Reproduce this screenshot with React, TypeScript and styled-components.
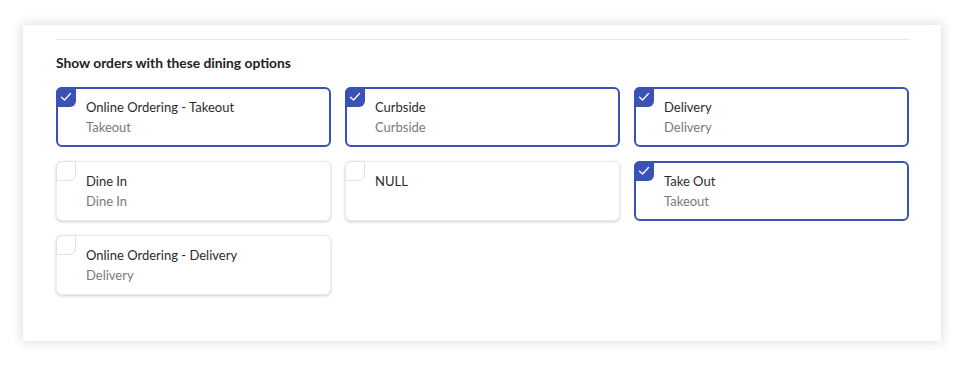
import React from "react";
import styled, { createGlobalStyle } from "styled-components";

const Global = createGlobalStyle`
  html, body { margin: 0; padding: 0; background: #ffffff; }
  body { font-family: Lato, "Noto Sans", sans-serif; }
`;

const Page = styled.div`
  width: 974px;
  height: 374px;
  padding: 25px 33px 0 23px;
  box-sizing: border-box;
  background: #ffffff;
`;

const Panel = styled.section`
  width: 918px;
  height: 316px;
  box-sizing: border-box;
  background: #ffffff;
  box-shadow: 0 0 10px 2px rgba(0, 0, 0, 0.12);
  padding: 14px 31px 0 33px;
`;

const Divider = styled.hr`
  margin: 0;
  border: none;
  border-top: 1px solid #e6e6e6;
`;

const Title = styled.h3`
  margin: 14px 0 0 0;
  font-size: 13.8px;
  line-height: 18px;
  font-weight: 700;
  color: #222;
`;

const Grid = styled.div`
  margin-top: 15px;
  display: grid;
  grid-template-columns: repeat(3, 275px);
  column-gap: 14px;
  row-gap: 14px;
`;

const Card = styled.div<{ $checked: boolean }>`
  position: relative;
  height: 60px;
  box-sizing: border-box;
  border-radius: 6px;
  background: #fff;
  border: ${(p) => (p.$checked ? "2px solid #3a52b6" : "1px solid #ececec")};
  box-shadow: ${(p) => (p.$checked ? "none" : "0 1px 3px rgba(0,0,0,0.2)")};
  padding: ${(p) => (p.$checked ? "9px 12px 0 28px" : "10px 13px 0 29px")};
`;

const Check = styled.span<{ $checked: boolean }>`
  position: absolute;
  top: ${(p) => (p.$checked ? "-2px" : "-1px")};
  left: ${(p) => (p.$checked ? "-2px" : "-1px")};
  width: 20px;
  height: 20px;
  box-sizing: border-box;
  border-radius: 6px 0 6px 0;
  background: ${(p) => (p.$checked ? "#3a52b6" : "#fff")};
  border: ${(p) => (p.$checked ? "none" : "1px solid #e2e2e2")};
  display: flex;
  align-items: center;
  justify-content: center;
`;

const Name = styled.div`
  font-size: 13px;
  line-height: 18px;
  color: #2b2b2b;
`;

const Sub = styled.div`
  margin-top: 2px;
  font-size: 13px;
  line-height: 18px;
  color: #7a7a7a;
`;

const options = [
  { name: "Online Ordering - Takeout", sub: "Takeout", checked: true },
  { name: "Curbside", sub: "Curbside", checked: true },
  { name: "Delivery", sub: "Delivery", checked: true },
  { name: "Dine In", sub: "Dine In", checked: false },
  { name: "NULL", sub: "", checked: false },
  { name: "Take Out", sub: "Takeout", checked: true },
  { name: "Online Ordering - Delivery", sub: "Delivery", checked: false },
];

export default function App() {
  return (
    <Page>
      <Global />
      <Panel>
        <Divider />
        <Title>Show orders with these dining options</Title>
        <Grid>
          {options.map((o) => (
            <Card key={o.name} $checked={o.checked}>
              <Check $checked={o.checked}>
                {o.checked && (
                  <svg width="12" height="10" viewBox="0 0 12 10">
                    <path d="M1.5 5.2 L4.5 8 L10.5 1.5" fill="none" stroke="#fff" strokeWidth="1.3" strokeLinecap="round" strokeLinejoin="round" />
                  </svg>
                )}
              </Check>
              <Name>{o.name}</Name>
              {o.sub && <Sub>{o.sub}</Sub>}
            </Card>
          ))}
        </Grid>
      </Panel>
    </Page>
  );
}
